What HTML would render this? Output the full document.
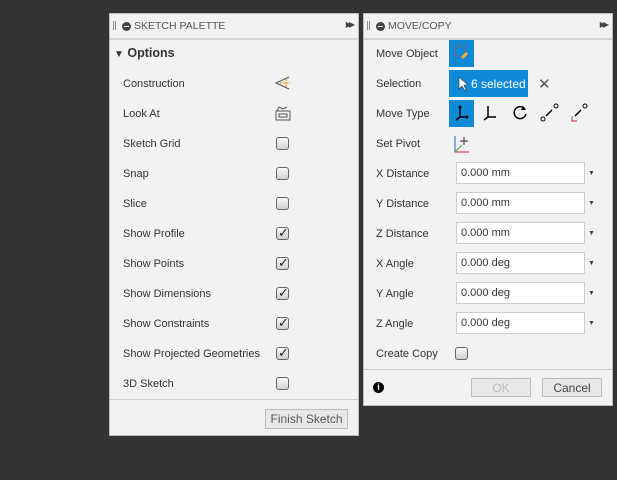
<!DOCTYPE html>
<html><head><style>
body{margin:0;width:617px;height:480px;background:#333;position:relative;overflow:hidden;font-family:"Liberation Sans",sans-serif;font-size:11px;color:#333}
.p{position:absolute;background:#f2f2f2;border:1px solid #bbb;box-sizing:border-box}
.h{position:absolute;left:0;right:0;top:0;height:24px;border-bottom:2px solid #d4d4d4;color:#555;font-size:10.5px}
.h .t{position:absolute;left:24px;top:6px}
.h .dot{position:absolute;left:12px;top:8px;width:9px;height:9px;border-radius:50%;background:#444}
.h .dot:after{content:"";position:absolute;left:2px;top:4px;width:5px;height:1px;background:#fff}
.h .g{position:absolute;left:3px;top:7px;height:9px;border-left:1px solid #888;border-right:1px solid #888;width:1px}
.h .ff{position:absolute;right:6px;top:6px;font-size:8px;letter-spacing:-3px;color:#444}
.l{position:absolute;white-space:nowrap}
.cb{position:absolute;width:13px;height:13px;border:1px solid #666;border-radius:3px;background:linear-gradient(#fafafa,#d0d0d0);box-sizing:border-box}
.cb.c:after{content:"✓";position:absolute;left:1px;top:-3px;font-size:13px;color:#222}
.in{position:absolute;left:92px;width:129px;height:22px;background:#fff;border:1px solid #ccc;box-sizing:border-box;padding:4px 0 0 4px}
.ar{position:absolute;left:224px;font-size:7px;color:#444}
.btn{position:absolute;border:1px solid #bbb;background:#e8e8e8;box-sizing:border-box;text-align:center;font-size:12px}
.blue{position:absolute;background:#0e8ad6}
</style></head><body>
<div class="p" style="left:109px;top:13px;width:250px;height:423px">
<div class="h"><span class="g"></span><span class="dot"></span><span class="t">SKETCH PALETTE</span><span class="ff">▶▶</span></div>
<div class="l" style="left:4px;top:32px;font-size:12.5px;font-weight:bold;color:#333"><span style="font-size:10px">▼</span> Options</div>
<div class="l" style="left:13px;top:64px">Construction</div>
<svg style="position:absolute;left:165px;top:62px" width="16" height="14"><path d="M14 1L1 7L14 13" stroke="#555" fill="none"/><path d="M5 7H15M11 3V11" stroke="#e8880a" stroke-dasharray="2 1" fill="none"/></svg>
<div class="l" style="left:13px;top:94px">Look At</div>
<svg style="position:absolute;left:165px;top:92px" width="16" height="15"><rect x="1" y="5" width="14" height="9" fill="none" stroke="#555"/><rect x="4" y="8" width="8" height="3" fill="none" stroke="#555"/><path d="M2 5L4 1L8 3L12 1" stroke="#555" fill="none"/></svg>
<div class="l" style="left:13px;top:124px">Sketch Grid</div><div class="cb" style="left:166px;top:123px"></div>
<div class="l" style="left:13px;top:154px">Snap</div><div class="cb" style="left:166px;top:153px"></div>
<div class="l" style="left:13px;top:184px">Slice</div><div class="cb" style="left:166px;top:183px"></div>
<div class="l" style="left:13px;top:214px">Show Profile</div><div class="cb c" style="left:166px;top:213px"></div>
<div class="l" style="left:13px;top:244px">Show Points</div><div class="cb c" style="left:166px;top:243px"></div>
<div class="l" style="left:13px;top:274px">Show Dimensions</div><div class="cb c" style="left:166px;top:273px"></div>
<div class="l" style="left:13px;top:304px">Show Constraints</div><div class="cb c" style="left:166px;top:303px"></div>
<div class="l" style="left:13px;top:334px">Show Projected Geometries</div><div class="cb c" style="left:166px;top:333px"></div>
<div class="l" style="left:13px;top:364px">3D Sketch</div><div class="cb" style="left:166px;top:363px"></div>
<div style="position:absolute;left:0;right:0;top:385px;border-top:1px solid #ccc"></div>
<div class="btn" style="left:155px;top:395px;width:83px;height:20px;padding-top:2px;color:#555">Finish Sketch</div>
</div>
<div class="p" style="left:363px;top:13px;width:250px;height:393px">
<div class="h"><span class="g"></span><span class="dot"></span><span class="t">MOVE/COPY</span><span class="ff">▶▶</span></div>
<div class="l" style="left:12px;top:34px">Move Object</div>
<div class="blue" style="left:85px;top:26px;width:25px;height:27px"></div>
<svg style="position:absolute;left:90px;top:31px" width="16" height="16"><rect x="1" y="1" width="10" height="10" fill="none" stroke="#a55" stroke-dasharray="2 1"/><path d="M8 13L13 8" stroke="#f0b030" stroke-width="3"/></svg>
<div class="l" style="left:12px;top:64px">Selection</div>
<div class="blue" style="left:85px;top:56px;width:79px;height:27px"></div>
<svg style="position:absolute;left:94px;top:62px" width="10" height="16"><path d="M1 1V13L4 10L7 15L8 14L6 9H10Z" fill="#fff" stroke="#333" stroke-width=".6"/></svg>
<div class="l" style="left:107px;top:63px;color:#fff;font-size:12px">6 selected</div>
<div class="l" style="left:174px;top:61px;font-size:15px;color:#555">✕</div>
<div class="l" style="left:12px;top:94px">Move Type</div>
<div class="blue" style="left:85px;top:86px;width:25px;height:27px"></div>
<svg style="position:absolute;left:88px;top:89px" width="20" height="20"><path d="M8 3V14H16M8 14L4 17" stroke="#000" stroke-width="1.5" fill="none"/><path d="M6 5L8 2L10 5M14 12L17 14L14 16" fill="#000"/></svg>
<svg style="position:absolute;left:116px;top:89px" width="20" height="20"><path d="M8 3V14H16M8 14L4 17" stroke="#000" stroke-width="1.5" fill="none"/></svg>
<svg style="position:absolute;left:146px;top:89px" width="20" height="20"><path d="M15 6A6 6 0 1 0 16 11" stroke="#000" stroke-width="1.5" fill="none"/><path d="M13 3L16 7L11 7Z" fill="#000"/></svg>
<svg style="position:absolute;left:176px;top:89px" width="20" height="20"><circle cx="3" cy="16" r="2" fill="none" stroke="#000"/><circle cx="16" cy="3" r="2" fill="none" stroke="#000"/><path d="M12 7L6 13" stroke="#000" stroke-width="1.5"/></svg>
<svg style="position:absolute;left:205px;top:89px" width="20" height="20"><circle cx="16" cy="3" r="2" fill="none" stroke="#000"/><path d="M12 7L6 13" stroke="#000" stroke-width="1.5"/><path d="M3 13V18H8" stroke="#d22" fill="none"/><path d="M3 13V16" stroke="#3a3"/></svg>
<div class="l" style="left:12px;top:124px">Set Pivot</div>
<svg style="position:absolute;left:89px;top:120px" width="18" height="20"><path d="M2 2V18H16" stroke="#1a5fd0" fill="none"/><path d="M2 18H16" stroke="#d22"/><path d="M2 18L9 11" stroke="#3a3"/><path d="M11 3V11M7 7H15" stroke="#222"/></svg>
<div class="l" style="left:12px;top:154px">X Distance</div><div class="in" style="top:148px">0.000 mm</div><div class="ar" style="top:156px">▼</div>
<div class="l" style="left:12px;top:184px">Y Distance</div><div class="in" style="top:178px">0.000 mm</div><div class="ar" style="top:186px">▼</div>
<div class="l" style="left:12px;top:214px">Z Distance</div><div class="in" style="top:208px">0.000 mm</div><div class="ar" style="top:216px">▼</div>
<div class="l" style="left:12px;top:244px">X Angle</div><div class="in" style="top:238px">0.000 deg</div><div class="ar" style="top:246px">▼</div>
<div class="l" style="left:12px;top:274px">Y Angle</div><div class="in" style="top:268px">0.000 deg</div><div class="ar" style="top:276px">▼</div>
<div class="l" style="left:12px;top:304px">Z Angle</div><div class="in" style="top:298px">0.000 deg</div><div class="ar" style="top:306px">▼</div>
<div class="l" style="left:12px;top:334px">Create Copy</div><div class="cb" style="left:91px;top:333px;width:13px;height:13px"></div>
<div style="position:absolute;left:0;right:0;top:355px;border-top:1px solid #ccc"></div>
<div style="position:absolute;left:9px;top:368px;width:11px;height:11px;border-radius:50%;background:#000;color:#fff;font-size:9px;font-weight:bold;text-align:center;line-height:11px">i</div>
<div class="btn" style="left:107px;top:364px;width:60px;height:19px;color:#bbb;padding-top:2px">OK</div>
<div class="btn" style="left:178px;top:364px;width:60px;height:19px;color:#444;padding-top:2px">Cancel</div>
</div>
</body></html>
